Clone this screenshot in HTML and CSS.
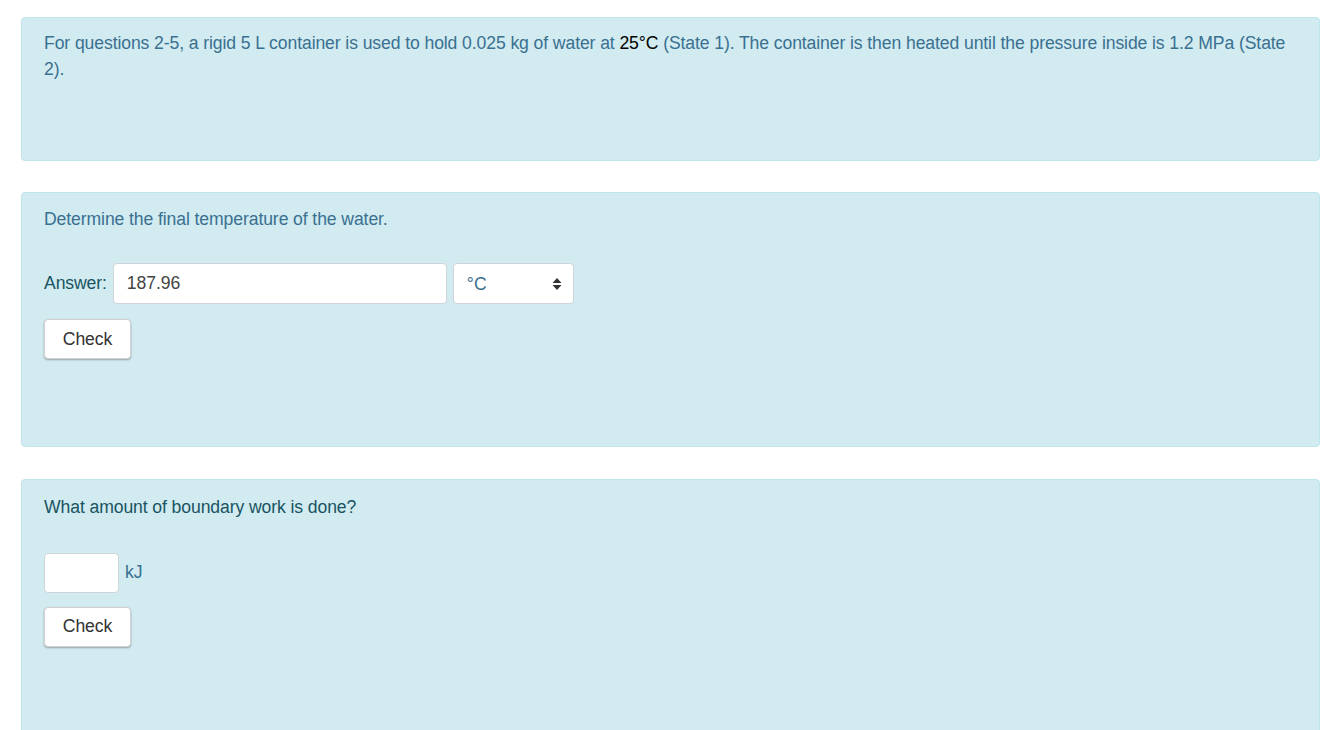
FILE: index.html
```html
<!DOCTYPE html>
<html lang="en">
<head>
    <meta charset="UTF-8">
    <meta name="viewport" content="width=device-width, initial-scale=1.0">
    <title>quiz</title>
    <link rel="stylesheet" href="styles.css">
</head>
<body>
    <div class="page">
        <div class="formulation intro">
            <p class="qtext">For questions 2-5, a rigid 5 L container is used to hold 0.025 kg of water at <span class="dark">25°C</span> (State 1). The container is then heated until the pressure inside is 1.2 MPa (State 2).</p>
        </div>

        <div class="formulation que">
            <p class="qtext">Determine the final temperature of the water.</p>
            <div class="ablock">
                <label class="answer_label" for="ans1">Answer:</label>
                <input type="text" id="ans1" class="answer_input wide" value="187.96">
                <span class="select_wrap">
                    <select class="unit_select">
                        <option>°C</option>
                        <option>K</option>
                    </select>
                    <svg class="select_arrow" width="10" height="14" viewBox="0 0 10 14"><path d="M5 1 L9.5 6 H0.5 Z M5 13 L9.5 8 H0.5 Z" fill="#333"/></svg>
                </span>
            </div>
            <button type="button" class="btn_check">Check</button>
        </div>

        <div class="formulation que last">
            <p class="qtext dark_teal">What amount of boundary work is done?</p>
            <div class="ablock small">
                <input type="text" class="answer_input short" value="">
                <span class="unit">kJ</span>
            </div>
            <button type="button" class="btn_check">Check</button>
        </div>
    </div>
</body>
</html>
```

FILE: styles.css
```css
*{margin:0;padding:0;box-sizing:border-box;}
body{font-family:"Liberation Sans", Arial, sans-serif;font-size:17.6px;line-height:1.5;letter-spacing:-0.1px;background:#fff;}
.page{padding:17px 11px 0 21px;}

.formulation{background-color:#d1ebf0;border:1px solid #bee5eb;border-radius:4px;padding:12px 22px 45px;color:#3a7090;}
.formulation + .formulation{margin-top:31px;}
.formulation .qtext{margin-bottom:32px;}
.formulation.que{padding-top:13px;padding-bottom:87px;}
.formulation.que .qtext{margin-bottom:31px;}
.formulation.last{margin-top:32px;padding-top:14px;padding-bottom:90px;}
.formulation.last .qtext{margin-bottom:32px;}
.dark{color:#000;}
.dark_teal{color:#195462;}

.ablock{display:flex;align-items:center;gap:6px;}
.answer_label{color:#195462;}
.answer_input{height:41px;border:1px solid #ced4da;border-radius:4px;background:#fff;padding:0 13px;font-family:inherit;font-size:17.6px;letter-spacing:-0.1px;color:#444;outline:none;}
.answer_input.wide{width:334px;}
.answer_input.short{width:75px;height:40px;}
.unit{color:#3a7090;}

.select_wrap{position:relative;display:inline-block;}
.unit_select{appearance:none;-webkit-appearance:none;width:121px;height:41px;border:1px solid #ced4da;border-radius:4px;background:#fff;padding:0 13px;font-family:inherit;font-size:17.6px;color:#3a7090;outline:none;}
.select_arrow{position:absolute;right:12px;top:14px;pointer-events:none;}

.btn_check{display:block;margin-top:15px;width:87px;height:40px;background:#fff;border:1px solid #d0d0d0;border-radius:4px;box-shadow:0 1px 2px rgba(0,0,0,0.3);font-family:inherit;font-size:17.6px;letter-spacing:-0.1px;color:#333;cursor:pointer;}
.last .btn_check{margin-top:14px;}
```
